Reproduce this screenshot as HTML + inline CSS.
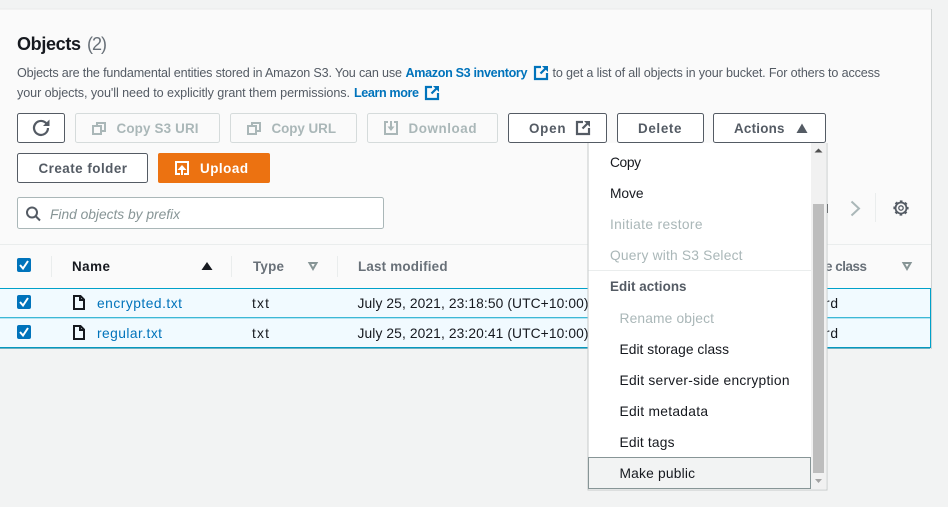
<!DOCTYPE html>
<html lang="en"><head><meta charset="utf-8"><title>Objects</title>
<style>
html,body{margin:0;padding:0;width:948px;height:507px;overflow:hidden;background:#f2f3f3}
svg{display:block}
text{font-family:"Liberation Sans",sans-serif;font-size:13.8px;white-space:pre}
.d{fill:#545b64}.b{font-weight:700;font-size:13.4px}.l{fill:#0073bb}.g{fill:#aab7b8}.k{fill:#16191f}
.s{font-size:12.6px}
</style></head><body>
<svg width="948" height="507" viewBox="0 0 948 507" xmlns="http://www.w3.org/2000/svg">
<rect width="948" height="507" fill="#f2f3f3"/>
<!-- card -->
<rect x="0" y="9" width="932" height="340" fill="#cfd3d3"/>
<rect x="0" y="9.500" width="931" height="339" fill="#fafafa"/>
<rect x="0" y="8.500" width="931" height="1" fill="#e9ebeb"/>
<text class="k" x="17" y="50" style="font-size:18px;font-weight:700" textLength="64" lengthAdjust="spacing">Objects</text>
<text x="87" y="50" style="font-size:18px;fill:#687078" textLength="20" lengthAdjust="spacing">(2)</text>
<text class="d s" x="17" y="77" textLength="385" lengthAdjust="spacing">Objects are the fundamental entities stored in Amazon S3. You can use</text>
<text class="l s" x="405.500" y="77" style="font-weight:700" textLength="122" lengthAdjust="spacing">Amazon S3 inventory</text>
<g fill="none" stroke="#0073bb" stroke-width="2.200"><path d="M541 67H535V79H547V73"/><path d="M540.500 73.500L546 68"/></g><path d="M542 66H548V72Z" fill="#0073bb"/>
<text class="d s" x="552.500" y="77" textLength="327.500" lengthAdjust="spacing">to get a list of all objects in your bucket. For others to access</text>
<text class="d s" x="17" y="97" textLength="333" lengthAdjust="spacing">your objects, you'll need to explicitly grant them permissions.</text>
<text class="l s" x="354" y="97" style="font-weight:700" textLength="65" lengthAdjust="spacing">Learn more</text>
<g fill="none" stroke="#0073bb" stroke-width="2.200"><path d="M432 87H426V99H438V93"/><path d="M431.500 93.500L437 88"/></g><path d="M433 86H439V92Z" fill="#0073bb"/>

<!-- buttons row 1 -->
<rect x="17.500" y="113.500" width="47" height="29" rx="2" fill="#fff" stroke="#545b64"/>
<path d="M46.800 124A7 7 0 1 0 48 128" fill="none" stroke="#545b64" stroke-width="2.200"/><path d="M43 126H49.500V119.500Z" fill="#545b64"/>
<g fill="none" stroke="#d5dbdb"><rect x="75.500" y="113.500" width="144" height="29" rx="2"/><rect x="230.500" y="113.500" width="126" height="29" rx="2"/><rect x="367.500" y="113.500" width="130" height="29" rx="2"/></g>
<g fill="none" stroke="#aab7b8" stroke-width="2">
<path d="M97 126V123H105V131H101"/><rect x="93" y="126" width="8" height="8"/>
<path d="M252 126V123H260V131H256"/><rect x="248" y="126" width="8" height="8"/>
<path d="M388 122H385V134H397V122H394"/><path d="M391 121V130"/>
</g>
<path d="M387.500 126.500H394.500L391 131Z" fill="#aab7b8"/>
<text class="g b" x="116.500" y="133" textLength="82" lengthAdjust="spacing">Copy S3 URI</text>
<text class="g b" x="271.500" y="133" textLength="64.500" lengthAdjust="spacing">Copy URL</text>
<text class="g b" x="408.500" y="133" textLength="68" lengthAdjust="spacing">Download</text>
<g fill="#fff" stroke="#545b64"><rect x="508.500" y="113.500" width="98" height="29" rx="2"/><rect x="617.500" y="113.500" width="86" height="29" rx="2"/><rect x="713.500" y="113.500" width="112" height="29" rx="2"/></g>
<text class="d b" x="529" y="133" textLength="36.500" lengthAdjust="spacing">Open</text>
<g fill="none" stroke="#545b64" stroke-width="2.200"><path d="M583 122H577V134H589V128"/><path d="M582.500 128.500L588 123"/></g><path d="M584 121H590V127Z" fill="#545b64"/>
<text class="d b" x="638" y="133" textLength="43.500" lengthAdjust="spacing">Delete</text>
<text class="d b" x="734" y="133" textLength="50.500" lengthAdjust="spacing">Actions</text>
<path d="M802 123.500L807.500 133H796.500Z" fill="#545b64"/>
<!-- row 2 -->
<rect x="17.500" y="153.500" width="130" height="29" rx="2" fill="#fff" stroke="#545b64"/>
<text class="d b" x="38.500" y="173" textLength="88.500" lengthAdjust="spacing">Create folder</text>
<rect x="158" y="153" width="112" height="30" rx="2" fill="#ec7211"/>
<path d="M180 174H176V162H188V174H184" fill="none" stroke="#fff" stroke-width="2"/><path d="M182 165L186.500 170H177.500Z" fill="#fff"/><path d="M182 168V175" stroke="#fff" stroke-width="2"/>
<text class="b" x="200" y="173" fill="#fff" textLength="48" lengthAdjust="spacing">Upload</text>
<!-- search -->
<rect x="17.500" y="197.500" width="366" height="31" rx="2" fill="#fff" stroke="#aab7b8"/>
<g fill="none" stroke="#545b64" stroke-width="2"><circle cx="32" cy="212.500" r="5"/><path d="M35.500 216L40 220.500"/></g>
<text x="50" y="219" style="font-style:italic" fill="#879596" textLength="130" lengthAdjust="spacing">Find objects by prefix</text>

<!-- table -->
<rect x="0" y="244" width="931" height="1" fill="#eaeded"/>
<rect x="0" y="288" width="931" height="60" fill="#f1faff"/>
<path d="M0 288.500H930.500V347.500H0" fill="none" stroke="#00a1c9"/>
<path d="M0 317.800H930" stroke="#00a1c9" stroke-width="1"/>
<path d="M0 348H930" stroke="#0a8fb3" stroke-width="1"/>
<g stroke="#eaeded"><path d="M51.500 256V277M231.500 256V277M337.500 256V277"/></g>
<g fill="#0073bb"><rect x="17" y="258" width="14" height="14" rx="2"/><rect x="17" y="295" width="14" height="14" rx="2"/><rect x="17" y="325" width="14" height="14" rx="2"/></g>
<g fill="none" stroke="#fff" stroke-width="2"><path d="M20 265L23 268.500L28 261"/><path d="M20 302L23 305.500L28 298"/><path d="M20 332L23 335.500L28 328"/></g>
<text class="k b" x="72" y="271" textLength="38" lengthAdjust="spacing">Name</text>
<path d="M207 262L212.500 270H201.500Z" fill="#16191f"/>
<text class="b" x="253" y="271" style="fill:#687078" textLength="31" lengthAdjust="spacing">Type</text>
<path d="M309.500 263H316.500L313 269Z" fill="none" stroke="#879596" stroke-width="2"/>
<text class="b" x="358" y="271" style="fill:#687078" textLength="89.500" lengthAdjust="spacing">Last modified</text>
<text class="b" x="825" y="271" style="fill:#687078" textLength="42" lengthAdjust="spacing">e class</text>
<path d="M903.500 263H910.500L907 269Z" fill="none" stroke="#879596" stroke-width="2"/>
<g fill="none" stroke="#16191f" stroke-width="2"><path d="M74 296H80.500L84 299.500V309H74Z"/><path d="M80 296V300H84"/><path d="M74 326H80.500L84 329.500V339H74Z"/><path d="M80 326V330H84"/></g>
<text class="l" x="97" y="308" textLength="85" lengthAdjust="spacing">encrypted.txt</text>
<text class="l" x="97" y="338" textLength="65" lengthAdjust="spacing">regular.txt</text>
<text class="k" x="252" y="308" textLength="17" lengthAdjust="spacing">txt</text>
<text class="k" x="252" y="338" textLength="17" lengthAdjust="spacing">txt</text>
<text class="k" x="357.500" y="308" textLength="231" lengthAdjust="spacing">July 25, 2021, 23:18:50 (UTC+10:00)</text>
<text class="k" x="357.500" y="338" textLength="231" lengthAdjust="spacing">July 25, 2021, 23:20:41 (UTC+10:00)</text>
<text class="k" x="825" y="308" textLength="13" lengthAdjust="spacing">rd</text>
<text class="k" x="825" y="338" textLength="13" lengthAdjust="spacing">rd</text>

<!-- pager / gear -->
<path d="M851.500 201.500L859 208.500L851.500 215.500" fill="none" stroke="#aab7b8" stroke-width="2"/>
<path d="M875.500 193V222" stroke="#eaeded"/>
<circle cx="901" cy="208" r="5.500" fill="none" stroke="#545b64" stroke-width="1.800"/>
<circle cx="901" cy="208" r="6.800" fill="none" stroke="#545b64" stroke-width="1.600" stroke-dasharray="2.670 2.670" stroke-dashoffset="1.330"/>
<circle cx="901" cy="208" r="2.200" fill="none" stroke="#545b64" stroke-width="1.300"/>
<rect x="826.500" y="204" width="1.500" height="9" fill="#16191f"/>

<!-- dropdown -->
<rect x="587.500" y="143" width="240" height="347.500" fill="#c6caca"/>
<rect x="588.500" y="143" width="238" height="346.500" fill="#fff"/>
<rect x="811" y="143" width="15" height="346" fill="#f1f1f1"/>
<rect x="813" y="204" width="11" height="269" fill="#bdbdbd"/>
<path d="M818.500 148.500L822.500 152.500H814.500Z" fill="#505050"/>
<path d="M815 479H822L818.500 483Z" fill="#a3a3a3"/>
<rect x="588.500" y="270" width="222.500" height="1" fill="#eaeded"/>
<rect x="588.500" y="457.500" width="222" height="31" fill="#f2f3f3" stroke="#879596"/>
<text class="k" x="610" y="167" textLength="31" lengthAdjust="spacing">Copy</text>
<text class="k" x="610" y="198" textLength="33.500" lengthAdjust="spacing">Move</text>
<text class="g" x="610" y="229" textLength="92.500" lengthAdjust="spacing">Initiate restore</text>
<text class="g" x="610" y="260" textLength="132.500" lengthAdjust="spacing">Query with S3 Select</text>
<text class="d b" x="610" y="291" textLength="76.500" lengthAdjust="spacing">Edit actions</text>
<text class="g" x="619.500" y="323" textLength="94.500" lengthAdjust="spacing">Rename object</text>
<text class="k" x="619.500" y="354" textLength="109.500" lengthAdjust="spacing">Edit storage class</text>
<text class="k" x="619.500" y="385" textLength="170" lengthAdjust="spacing">Edit server-side encryption</text>
<text class="k" x="619.500" y="416" textLength="88.500" lengthAdjust="spacing">Edit metadata</text>
<text class="k" x="619.500" y="447" textLength="55" lengthAdjust="spacing">Edit tags</text>
<text class="k" x="619.500" y="478" textLength="75.500" lengthAdjust="spacing">Make public</text>
</svg>
</body></html>
